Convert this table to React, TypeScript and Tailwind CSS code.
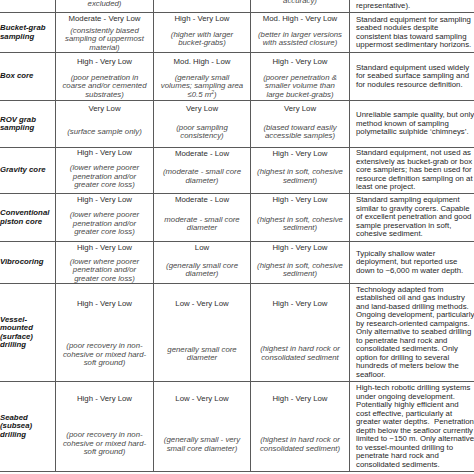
import React from "react";

type Cell = {
     rating?: string;
     rMt?: string;
     note: React.ReactNode[];
     nMt?: string;
};

type Row = {
     h: string;
     name: string[];
     cells: Cell[];
     desc: string[];
};

const rows: Row[] = [
     {
          h: "h-[13px]",
          name: [],
          cells: [
               { note: ["excluded)"], nMt: "mt-0" },
               { note: [] },
               { note: ["accuracy)"], nMt: "-mt-[3px]" },
          ],
          desc: ["representative)."],
     },
     {
          h: "h-[40px]",
          name: ["Bucket-grab", "sampling"],
          cells: [
               { rating: "Moderate - Very Low", rMt: "mt-[2px]", note: ["(consistently biased", "sampling of uppermost", "material)"], nMt: "mt-[3px]" },
               { rating: "High - Very Low", rMt: "mt-[2px]", note: ["(higher with larger", "bucket-grabs)"], nMt: "mt-[7px]" },
               { rating: "Mod. High - Very Low", rMt: "mt-[2px]", note: ["(better in larger versions", "with assisted closure)"], nMt: "mt-[7px]" },
          ],
          desc: ["Standard equipment for sampling", "seabed nodules despite", "consistent bias toward sampling", "uppermost sedimentary horizons."],
     },
     {
          h: "h-[48px]",
          name: ["Box core"],
          cells: [
               { rating: "High - Very Low", rMt: "mt-[5px]", note: ["(poor penetration in", "coarse and/or cemented", "substrates)"], nMt: "mt-[7px]" },
               {
                    rating: "Mod. High - Low",
                    rMt: "mt-[5px]",
                    note: [
                         "(generally small",
                         "volumes; sampling area",
                         <span key="m">
                              ≤0.5 m<sup className="text-[5px] leading-none">2</sup>)
                         </span>,
                    ],
                    nMt: "mt-[7px]",
               },
               { rating: "High - Very Low", rMt: "mt-[5px]", note: ["(poorer penetration &", "smaller volume than", "large bucket-grabs)"], nMt: "mt-[7px]" },
          ],
          desc: ["Standard equipment used widely", "for seabed surface sampling and", "for nodules resource definition."],
     },
     {
          h: "h-[47px]",
          name: ["ROV grab", "sampling"],
          cells: [
               { rating: "Very Low", rMt: "mt-[4px]", note: ["(surface sample only)"], nMt: "mt-[14px]" },
               { rating: "Very Low", rMt: "mt-[4px]", note: ["(poor sampling", "consistency)"], nMt: "mt-[10px]" },
               { rating: "Very Low", rMt: "mt-[4px]", note: ["(biased toward easily", "accessible samples)"], nMt: "mt-[10px]" },
          ],
          desc: ["Unreliable sample quality, but only", "method known of sampling", "polymetallic sulphide \u2018chimneys\u2019."],
     },
     {
          h: "h-[46px]",
          name: ["Gravity core"],
          cells: [
               { rating: "High - Very Low", rMt: "mt-[1px]", note: ["(lower where poorer", "penetration and/or", "greater core loss)"], nMt: "mt-[6.5px]" },
               { rating: "Moderate - Low", rMt: "mt-[1.5px]", note: ["(moderate - small core", "diameter)"], nMt: "mt-[10px]" },
               { rating: "High - Very Low", rMt: "mt-[1.5px]", note: ["(highest in soft, cohesive", "sediment)"], nMt: "mt-[10px]" },
          ],
          desc: ["Standard equipment, not used as", "extensively as bucket-grab or box", "core samplers; has been used for", "resource definition sampling on at", "least one project."],
     },
     {
          h: "h-[48px]",
          name: ["Conventional", "piston core"],
          cells: [
               { rating: "High - Very Low", rMt: "mt-[2px]", note: ["(lower where poorer", "penetration and/or", "greater core loss)"], nMt: "mt-[6.5px]" },
               { rating: "Moderate - Low", rMt: "mt-[2px]", note: ["moderate - small core", "diameter"], nMt: "mt-[11px]" },
               { rating: "High - Very Low", rMt: "mt-[2px]", note: ["(highest in soft, cohesive", "sediment)"], nMt: "mt-[11px]" },
          ],
          desc: ["Standard sampling equipment", "similar to gravity corers. Capable", "of excellent penetration and good", "sample preservation in soft,", "cohesive sediment."],
     },
     {
          h: "h-[42px]",
          name: ["Vibrocoring"],
          cells: [
               { rating: "High - Very Low", rMt: "mt-[2px]", note: ["(lower where poorer", "penetration and/or", "greater core loss)"], nMt: "mt-[5px]" },
               { rating: "Low", rMt: "mt-[2px]", note: ["(generally small core", "diameter)"], nMt: "mt-[9px]" },
               { rating: "High - Very Low", rMt: "mt-[2px]", note: ["(highest in soft, cohesive", "sediment)"], nMt: "mt-[9px]" },
          ],
          desc: ["Typically shallow water", "deployment, but reported use", "down to ~6,000 m water depth."],
     },
     {
          h: "h-[98px]",
          name: ["Vessel-", "mounted", "(surface)", "drilling"],
          cells: [
               { rating: "High - Very Low", rMt: "mt-[16px]", note: ["(poor recovery in non-", "cohesive or mixed hard-", "soft ground)"], nMt: "mt-[33.5px]" },
               { rating: "Low - Very Low", rMt: "mt-[16px]", note: ["generally small core", "diameter"], nMt: "mt-[37px]" },
               { rating: "High - Very Low", rMt: "mt-[16px]", note: ["(highest in hard rock or", "consolidated sediment"], nMt: "mt-[36.5px]" },
          ],
          desc: [
               "Technology adapted from",
               "established oil and gas industry",
               "and land-based drilling methods.",
               "Ongoing development, particularly",
               "by research-oriented campaigns.",
               "Only alternative to seabed drilling",
               "to penetrate hard rock and",
               "consolidated sediments. Only",
               "option for drilling to several",
               "hundreds of meters below the",
               "seafloor.",
          ],
     },
     {
          h: "h-[90px]",
          name: ["Seabed", "(subsea)", "drilling"],
          cells: [
               { rating: "High - Very Low", rMt: "mt-[13px]", note: ["(poor recovery in non-", "cohesive or mixed hard-", "soft ground)"], nMt: "mt-[27.5px]" },
               { rating: "Low - Very Low", rMt: "mt-[13px]", note: ["(generally small - very", "small core diameter)"], nMt: "mt-[32.5px]" },
               { rating: "High - Very Low", rMt: "mt-[13px]", note: ["(highest in hard rock or", "consolidated sediment)"], nMt: "mt-[32.5px]" },
          ],
          desc: [
               "High-tech robotic drilling systems",
               "under ongoing development.",
               "Potentially highly efficient and",
               "cost effective, particularly at",
               "greater water depths.\u00a0 Penetration",
               "depth below the seafloor currently",
               "limited to ~150 m. Only alternative",
               "to vessel-mounted drilling to",
               "penetrate hard rock and",
               "consolidated sediments.",
          ],
     },
];

export default function App() {
     return (
          <div className="w-[474px] h-[474px] overflow-hidden bg-white font-['Liberation_Sans',Arial,sans-serif] text-[7.8px] leading-[8.5px]">
               {rows.map((row, i) => (
                    <div key={i} className={`grid grid-cols-[56px_98px_97px_99px_180px] w-[530px] border-b-[1.5px] border-[#5a5a5a] ${row.h}`}>
                         <div className="flex flex-col justify-center border-r-[1.5px] border-[#5a5a5a] font-bold italic text-[#151515]">
                              {row.name.map((n) => (
                                   <div key={n} className="whitespace-nowrap">{n}</div>
                              ))}
                         </div>

                         {row.cells.map((c, j) => (
                              <div key={j} className="flex flex-col items-center text-center border-r-[1.5px] border-[#5a5a5a] overflow-hidden">
                                   {c.rating && <div className={`${c.rMt} whitespace-nowrap text-[#2e2e2e]`}>{c.rating}</div>}
                                   {c.note.length > 0 && (
                                        <div className={`${c.nMt} italic text-[#4a4a4a]`}>
                                             {c.note.map((n, k) => (
                                                  <div key={k} className="whitespace-nowrap">{n}</div>
                                             ))}
                                        </div>
                                   )}
                              </div>
                         ))}

                         <div className="flex flex-col justify-center pl-[6px] text-[#1f1f1f]">
                              {row.desc.map((d, k) => (
                                   <div key={k} className="whitespace-nowrap">{d}</div>
                              ))}
                         </div>
                    </div>
               ))}
          </div>
     );
}
